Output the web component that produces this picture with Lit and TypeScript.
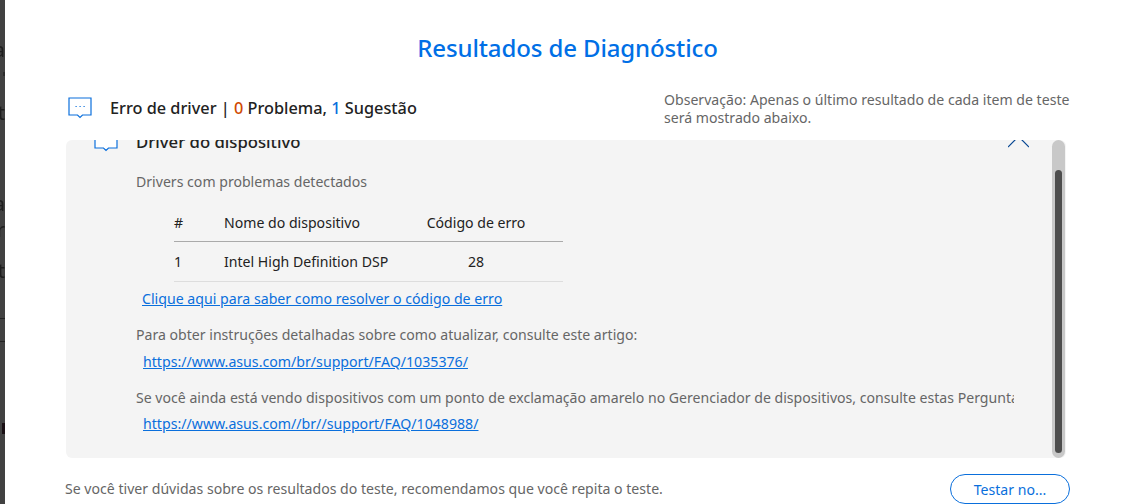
import { LitElement, html, css, svg } from 'lit';
import { customElement } from 'lit/decorators.js';

const bubble = svg`<path d="M1 1h22v17h-8.5L12 20.5 9.5 18H1z" fill="#fff" stroke="#0a6fdc" stroke-width="1.2" />
  <path d="M7.5 9.5h1.2M11.5 9.5h1.2M15.5 9.5h1.2" stroke="#0a6fdc" stroke-width="1.2" />`;

// bits of the page behind the dialog: [top, glyph]
const behind: [number, string][] = [
  [38, 'a'],
  [101, 't'],
  [192, 'a'],
  [218, 'r'],
  [259, 't'],
];

@customElement('app-root')
export class AppRoot extends LitElement {
  static styles = css`
    :host {
      display: flex;
      width: 1130px;
      height: 504px;
      overflow: hidden;
      background: #fff;
      font-family: 'Noto Sans', 'Open Sans', sans-serif;
      font-size: 14.1px;
      color: #666;
    }

    .behind {
      position: relative;
      flex: 0 0 5px;
      overflow: hidden;
      background: #414141;
      color: #1e1e1e;
      font-size: 20px;
      line-height: 24px;
    }
    .behind span {
      position: absolute;
      right: 0;
      filter: blur(0.4px);
    }
    .behind i {
      position: absolute;
      left: 0;
      width: 5px;
      height: 1px;
      background: #222;
    }
    .behind b {
      position: absolute;
      left: 2px;
      top: 423px;
      width: 3px;
      height: 11px;
      background: #1a1014;
    }
    .behind .tick {
      position: absolute;
      left: 3px;
      top: 72px;
      width: 2px;
      height: 4px;
      background: #2c2c2c;
    }

    .dialog {
      flex: 1;
      display: flex;
      flex-direction: column;
      min-width: 0;
      padding: 0 60px;
    }

    h1 {
      margin: 31px 0 0;
      height: 34px;
      font-size: 24px;
      line-height: 34px;
      font-weight: 500;
      letter-spacing: -0.12px;
      text-align: center;
      color: #006fe6;
    }

    .summary {
      display: flex;
      justify-content: space-between;
      height: 75px;
      padding-left: 3px;
    }
    .summary__left {
      display: flex;
      align-items: center;
      gap: 18px;
      height: 86px;
      font-size: 16.3px;
      font-weight: 500;
      color: #222;
    }
    .summary__left svg {
      display: block;
    }
    .zero {
      color: #d04a02;
    }
    .one {
      color: #0a6fdc;
    }
    .note {
      width: 408px;
      margin: 26px -2px 0 0;
      line-height: 18px;
    }

    .card {
      position: relative;
      height: 318px;
      margin: 0 4px 0 1px;
      overflow: hidden;
      background: #f4f4f4;
      border-radius: 6px;
    }
    .card__body {
      display: flex;
      flex-direction: column;
      width: 920px;
      margin-top: -12px;
      padding-left: 28px;
      overflow: hidden;
      white-space: nowrap;
    }
    .card__title {
      display: flex;
      align-items: center;
      gap: 18px;
      height: 26px;
      font-size: 16.7px;
      font-weight: 500;
      color: #222;
    }
    .card__desc {
      margin: 18px 0 0 42px;
      line-height: 20px;
    }

    table {
      width: 389px;
      margin: 11px 0 0 80px;
      border-collapse: collapse;
      color: #222;
    }
    th,
    td {
      padding: 0;
      font-weight: 400;
      text-align: left;
    }
    th {
      height: 38px;
      border-bottom: 1px solid #aaa;
    }
    td {
      height: 39px;
      border-bottom: 1px solid #ddd;
    }
    .col-num {
      width: 50px;
    }
    th.col-code,
    td.col-code {
      width: 100px;
      padding-right: 37px;
      text-align: center;
    }

    a {
      color: #0a6fdc;
      font-size: 14.17px;
      text-decoration: underline;
    }
    .fix {
      margin: 7px 0 0 48px;
      line-height: 20px;
    }
    .para {
      margin: 16px 0 0 42px;
      line-height: 20px;
    }
    .url {
      margin: 7px 0 0 49px;
      line-height: 20px;
    }
    .url--tight {
      margin-top: 6px;
    }

    .expand {
      position: absolute;
      top: -5px;
      left: 942px;
    }

    .scrollbar {
      position: absolute;
      top: 0;
      bottom: 0;
      left: 986px;
      width: 13px;
      padding: 30px 3px 5px;
      box-sizing: border-box;
      background: #c8c8c8;
      border-radius: 7px;
    }
    .scrollbar div {
      height: 100%;
      background: #4d4d4d;
      border-radius: 4px;
    }

    .footer {
      display: flex;
      align-items: flex-start;
      justify-content: space-between;
      margin-top: 16px;
    }
    .footer p {
      margin: 5px 0 0;
      line-height: 20px;
    }
    button {
      width: 120px;
      height: 30px;
      background: #fff;
      border: 1px solid #0a6fdc;
      border-radius: 15px;
      color: #0a6fdc;
      font: inherit;
    }
  `;

  render() {
    return html`
      <div class="behind">
        ${behind.map(([top, glyph]) => html`<span style="top:${top}px">${glyph}</span>`)}
        <div class="tick"></div>
        <i style="top:318px"></i>
        <i style="top:341px"></i>
        <b></b>
      </div>
      <div class="dialog">
        <h1>Resultados de Diagnóstico</h1>
        <div class="summary">
          <div class="summary__left">
            <svg width="24" height="23" viewBox="0 0 24 23">${bubble}</svg>
            <span>Erro de driver | <span class="zero">0</span> Problema, <span class="one">1</span> Sugestão</span>
          </div>
          <div class="note">Observação: Apenas o último resultado de cada item de teste será mostrado abaixo.</div>
        </div>
        <div class="card">
          <div class="card__body">
            <div class="card__title">
              <svg width="24" height="23" viewBox="0 0 24 23">${bubble}</svg>
              <span>Driver do dispositivo</span>
            </div>
            <div class="card__desc">Drivers com problemas detectados</div>
            <table>
              <tr>
                <th class="col-num">#</th>
                <th>Nome do dispositivo</th>
                <th class="col-code">Código de erro</th>
              </tr>
              <tr>
                <td>1</td>
                <td>Intel High Definition DSP</td>
                <td class="col-code">28</td>
              </tr>
            </table>
            <div class="fix"><a href="#">Clique aqui para saber como resolver o código de erro</a></div>
            <div class="para">Para obter instruções detalhadas sobre como atualizar, consulte este artigo:</div>
            <div class="url"><a href="#">https://www.asus.com/br/support/FAQ/1035376/</a></div>
            <div class="para">Se você ainda está vendo dispositivos com um ponto de exclamação amarelo no Gerenciador de dispositivos, consulte estas Perguntas Frequentes:</div>
            <div class="url url--tight"><a href="#">https://www.asus.com//br//support/FAQ/1048988/</a></div>
          </div>
          <svg class="expand" width="21" height="13" viewBox="0 0 21 13">
            <path d="M0 12L10.5 1.5 21 12" fill="none" stroke="#0b4a94" stroke-width="1.2" />
          </svg>
          <div class="scrollbar"><div></div></div>
        </div>
        <div class="footer">
          <p>Se você tiver dúvidas sobre os resultados do teste, recomendamos que você repita o teste.</p>
          <button>Testar no...</button>
        </div>
      </div>
    `;
  }
}
